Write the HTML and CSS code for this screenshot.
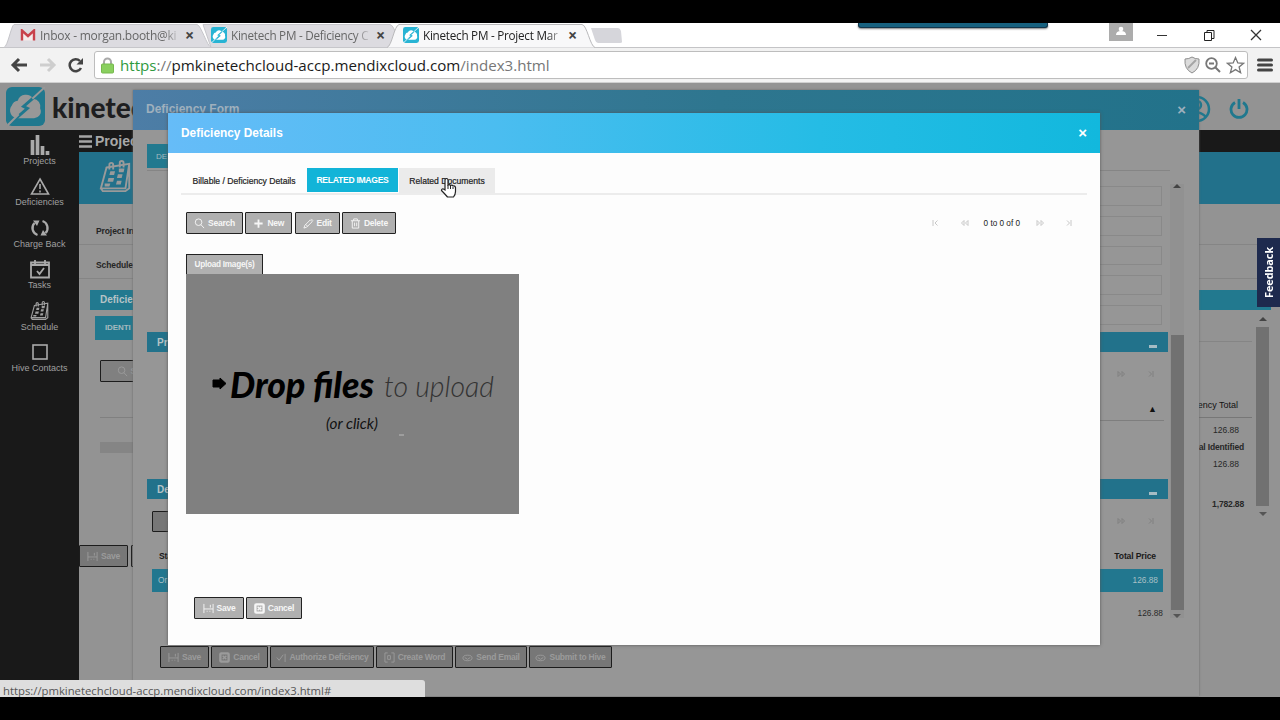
FILE: index.html
```html
<!DOCTYPE html>
<html lang="en">
  <head>
    <meta charset="UTF-8" />
    <meta name="viewport" content="width=device-width, initial-scale=1.0" />
    <title>Kinetech PM - Project Management</title>
    <link rel="stylesheet" href="styles.css">
  </head>
  <body>
    <!-- Shared icons -->
    <svg class="defs" width="0" height="0">
      <symbol id="i-logo" viewBox="0 0 40 40">
        <rect width="40" height="40" rx="6" fill="var(--tile)" />
        <path d="M11 32a8 8 0 0 1-5-13 7 7 0 0 1 6-5 9 9 0 0 1 16-2 8 8 0 0 1 7 10 7 7 0 0 1-7 10z" fill="var(--mark)" />
        <path d="M34 6 18 20l4 2L7 35" fill="none" stroke="var(--tile)" stroke-width="3" />
        <path d="M40 0 27 12M13 28 2 39" fill="none" stroke="var(--mark)" stroke-width="2" />
      </symbol>
      <symbol id="i-search" viewBox="0 0 12 12"><circle cx="5" cy="4.6" r="3.6" /><path d="M7.6 7.3 11 11" /></symbol>
      <symbol id="i-plus" viewBox="0 0 12 12"><path d="M6 1.5v9M1.5 6h9" stroke-width="2" /></symbol>
      <symbol id="i-edit" viewBox="0 0 12 12"><path d="M1 11l1-3 6-6 2 2-6 6zM3 7l2 2M9 1l2 2" /></symbol>
      <symbol id="i-trash" viewBox="0 0 12 12"><path d="M1 3h10M4 3V1h4v2M2.5 3v8h7V3M5 5v4M7.300 5v4" /></symbol>
      <symbol id="i-save" viewBox="0 0 12 12"><path d="M1 1v10M11 1v10M1 6.500h10M4 9h1M7 9h1M8 2v3" /></symbol>
      <symbol id="i-cancel" viewBox="0 0 12 12"><rect x="1.500" y="1.500" width="9" height="9" rx="1" stroke-width="2.600" /><path d="M4 4l4 4M8 4l-4 4" stroke-width="1.600" /></symbol>
      <symbol id="i-check" viewBox="0 0 12 12"><path d="M2 6l2.500 3L9 3M11 2v9" /></symbol>
      <symbol id="i-word" viewBox="0 0 12 12"><path d="M4 1H1v10h3M4 4h3v4H4zM8 1h3v10H8" /></symbol>
      <symbol id="i-mail" viewBox="0 0 12 12"><ellipse cx="6" cy="6.500" rx="5" ry="3" /><path d="M3 6l3 2 3-2" /></symbol>
      <symbol id="i-first" viewBox="0 0 10 10"><path d="M3 2v6M7.500 2.500 5 5l2.500 2.500" /></symbol>
      <symbol id="i-prev" viewBox="0 0 10 10"><path d="M5 2.500 2.500 5 5 7.500zM9 2.500 6.500 5 9 7.500z" /></symbol>
      <symbol id="i-next" viewBox="0 0 10 10"><path d="M2 2.500 4.500 5 2 7.500zM6 2.500 8.500 5 6 7.500z" /></symbol>
      <symbol id="i-last" viewBox="0 0 10 10"><path d="M7 2v6M3 2.500 5.500 5 3 7.500" /></symbol>
      <symbol id="i-schedule" viewBox="0 0 36 36">
        <path d="M8 8 32 4v26l-4 3H4L2 30zM8 8 2 30h26l4-26" fill="none" stroke="currentColor" stroke-width="2" />
        <path d="M12 12h5l-1 4h-5zM20 15h5l-1 4h-5zM10 19h6l-1 4H9zM21 9h6l-1 4h-5zM19 22h5l-1 4h-5zM6 25h6l-1 3H6z" fill="currentColor" />
        <path d="M11 10V5a2 2 0 0 1 4 0v5M22 8V3a2 2 0 0 1 4 0v5" fill="none" stroke="currentColor" stroke-width="2" />
      </symbol>
    </svg>

    <div class="browser">
      <!-- Tabs -->
      <div class="tab-strip">
        <svg class="tab-shapes" width="640" height="25" viewBox="0 0 640 25">
          <path d="M4 24.500C8 23 11 3 14 1.500H197C201 2 207 23 211 24.500z" fill="#dcdbe0" stroke="#c6c6ca" />
          <path d="M203 1.500H390C395 2 399 23 403 24.500H211z" fill="#dcdbe0" stroke="#c6c6ca" />
          <path d="M387 24.500C392 23 394 3 399 1.500H582C587 2 590 23 595 24.500" fill="#f8f8f9" stroke="#b9b9bb" />
          <path d="M591 5h27q2 0 3 3l1 11q0 1-2 1h-22q-2 0-3-3z" fill="#d6d6db" />
        </svg>
        <div class="tabs">
          <div class="tab tab-mail">
            <svg width="16" height="12" viewBox="0 0 16 12"><path d="M2 11.500V1.500l6 5.500 6-5.500v10" fill="#f4eaea" stroke="#c8414b" stroke-width="2.400" /></svg>
            <span class="tab-text">Inbox - morgan.booth@ki</span><b>×</b>
          </div>
          <div class="tab tab-def">
            <svg class="fav" width="16" height="16"><use href="#i-logo" /></svg>
            <span class="tab-text">Kinetech PM - Deficiency C</span><b>×</b>
          </div>
          <div class="tab tab-active">
            <svg class="fav" width="16" height="16"><use href="#i-logo" /></svg>
            <span class="tab-text">Kinetech PM - Project Mar</span><b>×</b>
          </div>
        </div>
        <div class="window-buttons">
          <div class="profile"><svg width="10" height="10" viewBox="0 0 10 10"><circle cx="5" cy="3" r="2.300" fill="#fff" /><path d="M0 9q0-4 5-4t5 4z" fill="#fff" /></svg></div>
          <svg width="12" height="12" viewBox="0 0 12 12"><path d="M1 6.500h10" stroke="#333" /></svg>
          <svg width="12" height="12" viewBox="0 0 12 12"><path d="M1.500 3.500h7v8h-7zM4 3.500v-2h7v8H8.500" fill="none" stroke="#222" /></svg>
          <svg width="12" height="12" viewBox="0 0 12 12"><path d="M1 1l10 10M11 1 1 11" stroke="#333" stroke-width="1.300" /></svg>
        </div>
        <div class="share-bar"></div>
      </div>

      <!-- Address bar -->
      <div class="toolbar">
        <svg width="18" height="16" viewBox="0 0 18 16"><path d="M17 8H3M9 2 3 8l6 6" fill="none" stroke="#444" stroke-width="3" /></svg>
        <svg width="18" height="16" viewBox="0 0 18 16"><path d="M1 8h14M9 2l6 6-6 6" fill="none" stroke="#cecece" stroke-width="3" /></svg>
        <svg width="16" height="16" viewBox="0 0 16 16"><path d="M13 11A6 6 0 1 1 12 4" fill="none" stroke="#444" stroke-width="2.500" /><path d="M15 1v6.500H8.500z" fill="#444" /></svg>
        <div class="address">
          <svg width="13" height="17" viewBox="0 0 13 17"><path d="M3 8V5a3.500 3.500 0 0 1 7 0v3" fill="none" stroke="#a9a9a9" stroke-width="2" /><rect x=".5" y="7" width="12" height="9" rx="1" fill="#8ad05f" stroke="#76b94e" /></svg>
          <span class="url"><span class="secure">https</span><span class="path">://</span>pmkinetechcloud-accp.mendixcloud.com<span class="path">/index3.html</span></span>
          <div class="address-icons">
            <svg width="16" height="18" viewBox="0 0 16 18"><path d="M1 3q4 0 7-2 3 2 7 2 1 10-7 14Q0 13 1 3z" fill="#dcdcdc" stroke="#8e8e8e" /><path d="M4 12l8-8" stroke="#a5a5a5" stroke-width="2" /></svg>
            <svg width="16" height="16" viewBox="0 0 16 16"><circle cx="6.500" cy="6.500" r="5.300" fill="none" stroke="#777" stroke-width="1.800" /><path d="M4 6.500h5M10.500 10.500 15 15" stroke="#777" stroke-width="2" /></svg>
            <svg width="19" height="18" viewBox="0 0 19 18"><path d="M9.500 1.500l2.300 5.400 5.800.4-4.500 3.700 1.500 5.700-5.100-3.100-5.100 3.100 1.500-5.700L1.400 7.300l5.800-.4z" fill="#fff" stroke="#777" stroke-width="1.300" /></svg>
          </div>
        </div>
        <svg width="16" height="14" viewBox="0 0 16 14"><path d="M1.500 2h13M1.500 7h13M1.500 12h13" stroke="#444" stroke-width="3" stroke-linecap="round" /></svg>
      </div>

      <div class="viewport">
        <!-- Application page -->
        <div class="app">
          <div class="app-header">
            <svg class="logo" width="39" height="39"><use href="#i-logo" /></svg>
            <span class="brand">kinetec</span>
            <div class="account">
              <svg width="28" height="28" viewBox="0 0 28 28"><g fill="none" stroke="#20788e" stroke-width="2.500"><circle cx="14" cy="14" r="12" /><circle cx="14" cy="10" r="4" /><path d="M5 22q9-9 18 0" /></g></svg>
              <svg width="20" height="22" viewBox="0 0 20 22"><path d="M6 4.500a8 8 0 1 0 8 0M10 1v10" fill="none" stroke="#20788e" stroke-width="2.800" /></svg>
            </div>
          </div>
          <div class="app-body">
            <div class="sidebar">
              <div class="nav-item"><svg width="20" height="20" viewBox="0 0 20 20"><path d="M2.500 20V5M7.500 20V0M12.500 20v-9M17.500 20v-4" stroke="#aaa" stroke-width="3.700" /></svg><span>Projects</span></div>
              <div class="nav-item"><svg width="20" height="20" viewBox="0 0 20 20"><path d="M10 3l8.500 15h-17zM10 8v5M10 14.500v2" fill="none" stroke="#aaa" stroke-width="1.600" /></svg><span>Deficiencies</span></div>
              <div class="nav-item"><svg width="20" height="20" viewBox="0 0 20 20"><path d="M7.500 17A7.300 7.300 0 0 1 4.500 5M12.500 3a7.300 7.300 0 0 1 3 12" fill="none" stroke="#aaa" stroke-width="2.300" /><path d="M3 2.500h6.500L7 8zM17 17.500h-6.500L13 12z" fill="#aaa" /></svg><span>Charge Back</span></div>
              <div class="nav-item"><svg width="20" height="20" viewBox="0 0 20 20"><path d="M1 3.500h18v15H1zM1 6h18M5 1v4M15 1v4M7 12l2.500 3L14 9" fill="none" stroke="#aaa" stroke-width="1.800" /></svg><span>Tasks</span></div>
              <div class="nav-item"><svg width="20" height="20"><use href="#i-schedule" /></svg><span>Schedule</span></div>
              <div class="nav-item"><svg width="20" height="20" viewBox="0 0 20 20"><rect x="3" y="3" width="14" height="14" fill="none" stroke="#aaa" stroke-width="1.600" /></svg><span>Hive Contacts</span></div>
            </div>
            <div class="main">
              <div class="title-bar">
                <svg width="13" height="13" viewBox="0 0 13 13"><path d="M0 1.500h13M0 6.500h13M0 11.500h13" stroke="#a5a5a5" stroke-width="2.400" /></svg>
                <span>Projec</span>
              </div>
              <div class="band"><svg width="34" height="36"><use href="#i-schedule" /></svg></div>
              <div class="info-row first">Project Inf</div>
              <div class="info-row">Schedule</div>
              <div class="group-bar">Deficie</div>
              <div class="main-columns">
                <div class="left-part">
                  <div class="sub-tab">IDENTI</div>
                  <div class="btn dim wide"><svg class="ic"><use href="#i-search" /></svg>Se</div>
                  <div class="rule"></div>
                  <div class="chunk"></div>
                </div>
                <div class="totals">
                  <div class="totals-head">ency Total</div>
                  <div class="amount">126.88</div>
                  <div class="amount strong">al Identified</div>
                  <div class="amount">126.88</div>
                  <div class="amount total">1,782.88</div>
                </div>
                <div class="scroll page-scroll"><i class="up"></i><div class="thumb"></div><i class="down"></i></div>
              </div>
              <div class="page-actions">
                <div class="btn dim"><svg class="ic"><use href="#i-save" /></svg>Save</div>
                <div class="btn dim"></div>
              </div>
            </div>
          </div>
        </div>

        <!-- Deficiency Form -->
        <div class="form-modal">
          <div class="form-head"><span>Deficiency Form</span><b>×</b></div>
          <div class="form-body">
            <div class="form-content">
              <div class="form-tabs"><span>DE</span></div>
              <div class="fields"><i></i><i></i><i></i><i></i><i></i></div>
              <div class="section-bar"><span>Pr</span><i></i></div>
              <div class="section-pager"><svg class="pg"><use href="#i-next" /></svg><svg class="pg"><use href="#i-last" /></svg></div>
              <div class="sort-row">▲</div>
              <div class="section-bar second"><span>De</span><i></i></div>
              <div class="section-tools">
                <div class="btn dim"><svg class="ic"><use href="#i-search" /></svg></div>
                <div class="section-pager"><svg class="pg"><use href="#i-next" /></svg><svg class="pg"><use href="#i-last" /></svg></div>
              </div>
              <div class="grid-head"><span>Sta</span><span>Total Price</span></div>
              <div class="grid-row"><span>Or</span><span>126.88</span></div>
              <div class="grid-sum">126.88</div>
            </div>
            <div class="scroll form-scroll"><i class="up"></i><div class="thumb"></div><i class="down"></i></div>
          </div>
          <div class="form-actions">
            <div class="btn dim w48"><svg class="ic"><use href="#i-save" /></svg>Save</div>
            <div class="btn dim w57"><svg class="ic"><use href="#i-cancel" /></svg>Cancel</div>
            <div class="btn dim w104"><svg class="ic"><use href="#i-check" /></svg>Authorize Deficiency</div>
            <div class="btn dim w77"><svg class="ic"><use href="#i-word" /></svg>Create Word</div>
            <div class="btn dim w72"><svg class="ic"><use href="#i-mail" /></svg>Send Email</div>
            <div class="btn dim w83"><svg class="ic"><use href="#i-mail" /></svg>Submit to Hive</div>
          </div>
        </div>

        <!-- Deficiency Details -->
        <div class="details-modal">
          <div class="details-head"><span>Deficiency Details</span><b>×</b></div>
          <div class="details-tabs">
            <div class="dtab plain">Billable / Deficiency Details</div>
            <div class="dtab active">RELATED IMAGES</div>
            <div class="dtab hover">Related Documents</div>
          </div>
          <div class="details-tools">
            <div class="btn w57"><svg class="ic"><use href="#i-search" /></svg>Search</div>
            <div class="btn w47"><svg class="ic"><use href="#i-plus" /></svg>New</div>
            <div class="btn w45"><svg class="ic"><use href="#i-edit" /></svg>Edit</div>
            <div class="btn w54"><svg class="ic"><use href="#i-trash" /></svg>Delete</div>
            <div class="pager">
              <svg class="pg"><use href="#i-first" /></svg>
              <svg class="pg"><use href="#i-prev" /></svg>
              <span>0 to 0 of 0</span>
              <svg class="pg"><use href="#i-next" /></svg>
              <svg class="pg"><use href="#i-last" /></svg>
            </div>
          </div>
          <div class="upload-label">Upload Image(s)</div>
          <div class="dropzone">
            <svg width="333" height="240" viewBox="0 0 333 240">
              <path d="M27 106h7v-2l6 5.500-6 5.500v-2h-7z" fill="#000" stroke="#000" />
              <text class="drop-strong" x="44" y="124" textLength="144" lengthAdjust="spacingAndGlyphs">Drop files</text>
              <text class="drop-light" x="198" y="123" textLength="110" lengthAdjust="spacingAndGlyphs">to upload</text>
              <text class="drop-small" x="140" y="155" textLength="52" lengthAdjust="spacingAndGlyphs">(or click)</text>
              <path d="M213 161h5" stroke="#bbb" />
            </svg>
          </div>
          <div class="details-actions">
            <div class="btn w50"><svg class="ic"><use href="#i-save" /></svg>Save</div>
            <div class="btn w56"><svg class="ic"><use href="#i-cancel" /></svg>Cancel</div>
          </div>
        </div>

        <div class="feedback">Feedback</div>
        <div class="status">https://pmkinetechcloud-accp.mendixcloud.com/index3.html#</div>
        <svg class="cursor" width="17" height="22" viewBox="0 0 17 22"><path d="M5 13V2.500q1.500-2 3 0V8q1.500-1 2.500.5 1.500-1 2.500.5 2-.5 2.500 1.500v4q0 3-2 5.500H7.500Q5 17 1.500 13.500q0-2 2-1.500z" fill="#fff" stroke="#222" stroke-width="1.200" /><path d="M8 8v4M10.500 9v3M13 10v2" stroke="#222" /></svg>
      </div>
    </div>
  </body>
</html>
```

FILE: styles.css
```css
* {
  box-sizing: border-box;
}

body {
  margin: 0;
  height: 720px;
  background-color: #000;
  padding: 23px 0;
  overflow: hidden;
  font-family: "Liberation Sans", Arial, sans-serif;
}

svg {
  display: block;
  flex: none;
}

.defs {
  position: absolute;
}

.browser {
  height: 674px;
  display: flex;
  flex-direction: column;
  background-color: #fff;
  overflow: hidden;
}

/* Tab strip */
.tab-strip {
  position: relative; /* anchors the tab outlines and the share bar */
  height: 25px;
  display: flex;
  justify-content: space-between;
  border-bottom: 1px solid #c4c4c6;
  font-family: "Open Sans", "Noto Sans", sans-serif;
}

.tab-shapes {
  position: absolute;
  top: 0;
  left: 0;
}

.tabs {
  position: relative;
  display: flex;
  padding-left: 20px;
}

.tab {
  display: flex;
  align-items: center;
  gap: 4px;
  width: 192px;
  color: #666;
  font-size: 12px;
  letter-spacing: -0.25px;
}

.tab-mail {
  width: 191px;
}

.tab-active {
  width: 190px;
  color: #222;
}

.tab-text {
  width: 141px;
  white-space: nowrap;
  -webkit-mask-image: linear-gradient(to right, #000 88%, transparent);
  mask-image: linear-gradient(to right, #000 88%, transparent);
}

.tab-def .tab-text,
.tab-active .tab-text {
  font-size: 11.7px;
}

.tab b {
  font-size: 16px;
  line-height: 16px;
  color: #444;
}

.fav {
  --tile: #28b4d4;
  --mark: #fff;
}

.window-buttons {
  display: flex;
  align-items: center;
  gap: 35px;
  padding-right: 18px;
}

.profile {
  align-self: flex-start;
  width: 24px;
  height: 18px;
  margin-right: -12px;
  padding: 3px 7px;
  background-color: #acacac;
}

.share-bar {
  position: absolute;
  left: 858px;
  top: 0;
  width: 190px;
  height: 5px;
  background-color: #17617f;
  border: 1px solid #12354a;
  border-top: 0;
  border-radius: 0 0 3px 3px;
  box-shadow: 0 1px 2px rgba(0, 0, 0, 0.5);
}

/* Address bar */
.toolbar {
  height: 35px;
  display: flex;
  align-items: center;
  gap: 11px;
  padding: 0 7px 0 10px;
  background-color: #f2f2f2;
  border-bottom: 1px solid #cfcfcf;
}

.address {
  flex: 1;
  height: 28px;
  display: flex;
  align-items: center;
  gap: 6px;
  margin: 0 -2px 0 -1px;
  padding: 0 2px 0 6px;
  background-color: #fff;
  border: 1px solid #bdbdbd;
  border-radius: 3px;
}

.url {
  flex: 1;
  font-family: "Open Sans", "Noto Sans", sans-serif;
  font-size: 15.13px;
  white-space: nowrap;
  color: #1b1b1b;
}

.secure {
  color: #2f9a3e;
}

.path {
  color: #777;
}

.address-icons {
  display: flex;
  align-items: center;
  gap: 5px;
}

/* Application page */
.viewport {
  position: relative; /* holds the dialogs that lie over the page */
  flex: 1;
  overflow: hidden;
  background-color: #939393;
}

.app-header {
  height: 47px;
  display: flex;
  align-items: center;
  padding: 0 31px 0 6px;
}

.logo {
  --tile: #20788e;
  --mark: #989898;
}

.brand {
  flex: 1;
  margin-left: 7px;
  font-family: Lato, sans-serif;
  font-weight: 900;
  font-size: 28px;
  color: #1e1e20;
}

.account {
  display: flex;
  align-items: center;
  gap: 18px;
  padding-top: 4px;
}

.app-body {
  display: flex;
  height: 567px;
}

.sidebar {
  width: 79px;
  padding-top: 5px;
  background-color: #191919;
}

.nav-item {
  height: 41.4px;
  display: flex;
  flex-direction: column;
  align-items: center;
  color: #a0a0a0;
  font-size: 9px;
  line-height: 13px;
}

.main {
  flex: 1;
  display: flex;
  flex-direction: column;
}

.title-bar {
  height: 22px;
  display: flex;
  align-items: center;
  gap: 3px;
  background-color: #191919;
  color: #a8a8a8;
  font-size: 14px;
  font-weight: bold;
}

.band {
  height: 52px;
  padding: 7px 0 0 20px;
  background-color: #22718b;
  color: #9a9a9a;
}

.info-row {
  height: 34px;
  padding: 13px 0 0 17px;
  border-bottom: 1px solid #858585;
  font-size: 8.5px;
  font-weight: bold;
  line-height: 14px;
  letter-spacing: -0.1px;
  color: #252525;
}

.info-row.first {
  height: 41px;
  padding-top: 20px;
}

.group-bar {
  height: 20px;
  margin: 11px 9px 0 11px;
  padding-left: 10px;
  background-color: #22798f;
  color: #b5c3c6;
  font-size: 10px;
  font-weight: bold;
  line-height: 20px;
}

.main-columns {
  height: 235px;
  display: flex;
  justify-content: space-between;
}

.left-part {
  width: 90px;
  padding: 6px 0 0 16px;
}

.sub-tab {
  width: 60px;
  height: 24px;
  padding-left: 10px;
  background-color: #22798f;
  color: #a5babf;
  font-size: 8px;
  font-weight: bold;
  letter-spacing: -0.1px;
  line-height: 24px;
}

.rule {
  height: 1px;
  margin: 35px 0 24px 5px;
  background-color: #808080;
}

.chunk {
  height: 11px;
  margin-left: 5px;
  background-color: #858585;
}

.totals {
  flex: 1;
  padding: 31px 4px 0 0;
  text-align: right;
  font-size: 9px;
  color: #272727;
}

.totals-head {
  padding: 53px 14px 0 0;
  height: 77px;
  border-top: 1px solid #858585;
  border-bottom: 1px solid #777;
  line-height: 20px;
  color: #111;
}

.amount {
  padding-right: 13px;
  height: 17px;
  line-height: 24px;
  font-size: 8.5px;
}

.amount.strong,
.amount.total {
  padding-right: 8px;
  font-weight: bold;
  letter-spacing: -0.15px;
}

.amount.total {
  margin-top: 23px;
}

/* Scroll bars */
.scroll {
  display: flex;
  flex-direction: column;
  align-items: center;
  justify-content: space-between;
}

.scroll i {
  border: 4px solid transparent;
}

.scroll .up {
  border-bottom-color: #444;
  border-top: 0;
}

.scroll .down {
  border-top-color: #555;
  border-bottom: 0;
}

.thumb {
  width: 13px;
  background-color: #717171;
}

.page-scroll {
  width: 13px;
  height: 206px;
  margin-right: 11px;
  padding-top: 7px;
}

.page-scroll .thumb {
  height: 179px;
}

.page-actions {
  display: flex;
  gap: 3px;
}

/* Buttons */
.btn {
  display: flex;
  align-items: center;
  justify-content: center;
  gap: 3px;
  flex: none;
  height: 22px;
  background-color: #b0b0b0;
  border: 1.5px solid #222;
  border-radius: 1px;
  color: #f6f6f6;
  font-size: 8.5px;
  font-weight: bold;
  letter-spacing: -0.25px;
  white-space: nowrap;
}

.btn.dim {
  background-color: #777;
  border-color: #1c1c1c;
  color: #9b9b9b;
}

.btn.wide {
  width: 57px;
  margin: 20px 0 0 5px;
  background-color: #808080;
}

.ic {
  width: 11px;
  height: 11px;
  fill: none;
  stroke: currentColor;
  stroke-width: 1;
}

.pg {
  width: 10px;
  height: 10px;
  fill: none;
  stroke: #c8c8c8;
  stroke-width: 1;
}

.page-actions .btn {
  width: 49px;
}

.w45 {
  width: 45px;
}

.w47 {
  width: 47px;
}

.w48 {
  width: 49px;
}

.w50 {
  width: 50px;
}

.w54 {
  width: 54px;
}

.w56 {
  width: 56px;
}

.w57 {
  width: 57px;
}

.w72 {
  width: 72px;
}

.w77 {
  width: 77px;
}

.w83 {
  width: 83px;
}

.w104 {
  width: 104px;
}

/* Deficiency Form dialog */
.form-modal {
  position: absolute;
  left: 133px;
  top: 7px;
  width: 1066px;
  height: 606px;
  background-color: #969696;
  box-shadow: 0 0 2px #666;
}

.form-head {
  height: 40px;
  display: flex;
  justify-content: space-between;
  padding: 0 13px;
  background: linear-gradient(to right, #4d7da6, #2e768f 55%, #22728a);
  color: #9fb0bd;
  font-size: 12px;
  line-height: 39px;
}

.form-head span {
  font-weight: bold;
}

.form-body {
  display: flex;
  height: 516px;
  margin: 0 15px 0 14px;
}

.form-content {
  flex: 1;
  padding-top: 14px;
}

.form-tabs {
  height: 27px;
  border-bottom: 1px solid #858585;
  font-size: 8px;
  color: #a5babf;
}

.form-tabs span {
  display: block;
  width: 40px;
  height: 24px;
  padding-left: 9px;
  background-color: #22798f;
  line-height: 25px;
}

.fields {
  display: flex;
  flex-direction: column;
  gap: 10px;
  padding: 15px 8px 7px 22px;
  height: 161px;
}

.fields i {
  height: 20px;
  border: 1px solid #898989;
}

.section-bar {
  display: flex;
  align-items: center;
  justify-content: space-between;
  height: 20px;
  padding: 0 11px 0 10px;
  background-color: #22728b;
  color: #b5c3c6;
  font-size: 10px;
  font-weight: bold;
  margin-right: 2px;
}

.section-bar i {
  width: 8px;
  height: 3px;
  margin-top: 8px;
  background-color: #a5bcc4;
}

.section-pager {
  display: flex;
  justify-content: flex-end;
  gap: 20px;
  padding: 17px 14px 0 0;
  height: 43px;
}

.section-pager .pg {
  stroke: #808080;
}

.sort-row {
  height: 26px;
  margin: 0 6px 0 22px;
  padding-right: 7px;
  border-bottom: 1px solid #7e7e7e;
  color: #111;
  font-size: 9px;
  line-height: 28px;
  text-align: right;
}

.section-bar.second {
  margin-top: 58px;
}

.section-tools {
  display: flex;
  justify-content: space-between;
  height: 33px;
  padding: 12px 0 0 5px;
}

.section-tools .btn {
  width: 40px;
  height: 21px;
}

.section-tools .section-pager {
  padding-top: 5px;
  height: 20px;
}

.grid-head {
  display: flex;
  justify-content: space-between;
  height: 37px;
  padding: 12px 14px 0 12px;
  font-size: 8.6px;
  font-weight: bold;
  line-height: 24px;
  letter-spacing: -0.15px;
  color: #1a1a1a;
}

.grid-row {
  display: flex;
  justify-content: space-between;
  height: 23px;
  margin: 0 7px 0 5px;
  padding: 0 5px 0 6px;
  background-color: #22778f;
  color: #a9c0c6;
  font-size: 8.3px;
  line-height: 23px;
}

.grid-sum {
  padding-right: 7px;
  text-align: right;
  font-size: 8.3px;
  line-height: 42px;
  color: #2a2a2a;
}

.form-scroll {
  width: 14px;
  height: 434px;
  margin-top: 54px;
  background-color: #919191;
}

.form-scroll .thumb {
  height: 275px;
  margin-top: 142px;
}

.form-actions {
  display: flex;
  gap: 2px;
  padding-left: 27px;
}

/* Deficiency Details dialog */
.details-modal {
  position: absolute;
  left: 168px;
  top: 30px;
  width: 932px;
  height: 532px;
  background-color: #fdfdfd;
  box-shadow: 0 0 3px #555;
}

.details-head {
  height: 40px;
  display: flex;
  justify-content: space-between;
  padding: 0 13px;
  background: linear-gradient(to right, #66bcf8, #4bbdf0 35%, #25bce5 70%, #12b8dd);
  color: #fff;
  font-size: 11.9px;
  font-weight: bold;
  line-height: 40px;
}

.details-head b,
.form-head b {
  font-size: 15px;
}

.details-tabs {
  display: flex;
  height: 42px;
  margin: 0 13px;
  padding-top: 15px;
  border-bottom: 2px solid #ececec;
}

.dtab {
  width: 96px;
  height: 25px;
  text-align: center;
  font-size: 8.6px;
  line-height: 26px;
  color: #222;
  white-space: nowrap;
  -webkit-text-stroke: 0.2px #222;
}

.dtab.plain {
  width: 126px;
}

.dtab.active {
  width: 91px;
  height: 24px;
  margin-right: 1px;
  background-color: #12b4d8;
  color: #fff;
  font-weight: bold;
  letter-spacing: -0.3px;
  line-height: 25px;
  -webkit-text-stroke: 0;
}

.dtab.hover {
  background-color: #ebebeb;
}

.details-tools {
  display: flex;
  gap: 2.3px;
  padding: 17px 26px 0 18px;
  height: 59px;
}

.pager {
  flex: 1;
  display: flex;
  align-items: center;
  justify-content: flex-end;
  gap: 19px;
  height: 22px;
  font-size: 8.2px;
  color: #222;
}

.pager span {
  margin: 0 -4px;
}

.upload-label {
  width: 77px;
  height: 20px;
  margin-left: 18px;
  background-color: #b0b0b0;
  border: 1.5px solid #222;
  border-bottom: 0;
  color: #f6f6f6;
  font-size: 8.2px;
  font-weight: bold;
  line-height: 20px;
  letter-spacing: -0.25px;
  text-align: center;
}

.dropzone {
  width: 333px;
  height: 240px;
  margin-left: 18px;
  background-color: #808080;
}

.drop-strong,
.drop-light,
.drop-small {
  font-family: Lato, sans-serif;
  font-style: italic;
}

.drop-strong {
  font-size: 36px;
  font-weight: 900;
}

.drop-light {
  font-size: 29px;
  font-weight: 300;
  fill: #333;
}

.drop-small {
  font-size: 15px;
  fill: #111;
}

.details-actions {
  display: flex;
  gap: 2px;
  padding: 83px 0 0 26px;
}

/* Floating pieces */
.feedback {
  position: absolute;
  right: 0;
  top: 155px;
  width: 23px;
  height: 69px;
  background-color: #1e2a4e;
  color: #fff;
  font-family: "Open Sans", sans-serif;
  font-size: 10.8px;
  font-weight: bold;
  line-height: 23px;
  text-align: center;
  writing-mode: vertical-rl;
  transform: rotate(180deg);
}

.status {
  position: absolute;
  left: 0;
  bottom: 0;
  width: 425px;
  height: 17px;
  padding-left: 3px;
  background-color: #dedede;
  border-top-right-radius: 3px;
  color: #555;
  font-family: "Open Sans", sans-serif;
  font-size: 11.3px;
  line-height: 21px;
  white-space: nowrap;
  overflow: hidden;
}

.cursor {
  position: absolute;
  left: 440px;
  top: 94px;
}
```
